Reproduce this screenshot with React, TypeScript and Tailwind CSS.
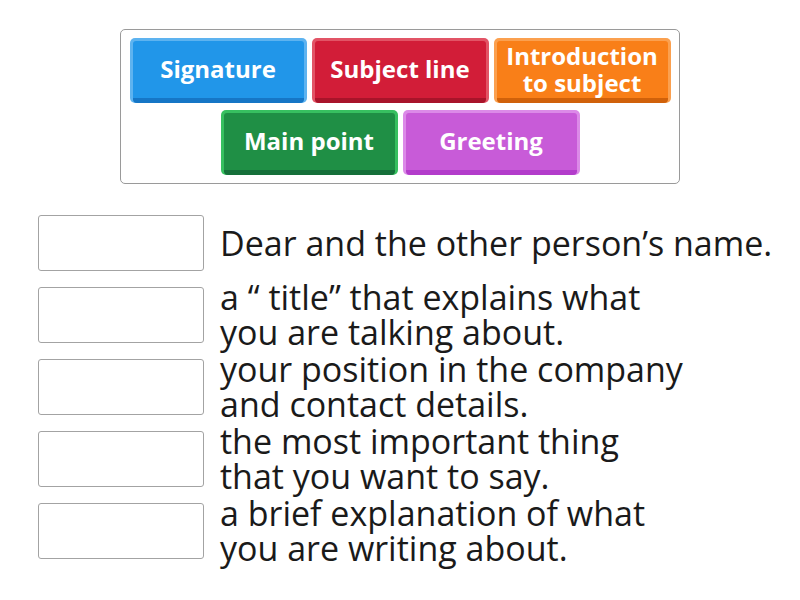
import React from "react";

type Tile = { label: string[]; light: string; main: string; dark: string };

const tiles: Tile[][] = [
  [
    { label: ["Signature"], light: "bg-[#5db3f0]", main: "bg-[#2196e9]", dark: "border-[#1676c6]" },
    { label: ["Subject line"], light: "bg-[#e25466]", main: "bg-[#d21d38]", dark: "border-[#a8142a]" },
    { label: ["Introduction", "to subject"], light: "bg-[#fba04f]", main: "bg-[#f97f18]", dark: "border-[#d0610a]" },
  ],
  [
    { label: ["Main point"], light: "bg-[#37c060]", main: "bg-[#1f8f45]", dark: "border-[#15703a]" },
    { label: ["Greeting"], light: "bg-[#dc8ae8]", main: "bg-[#c85bd8]", dark: "border-[#b33ccb]" },
  ],
];

const rows: string[][] = [
  ["Dear and the other person\u2019s name."],
  ["a \u201c title\u201d that explains what", "you are talking about."],
  ["your position in the company", "and contact details."],
  ["the most important thing", "that you want to say."],
  ["a brief explanation of what", "you are writing about."],
];

function TileView({ t }: { t: Tile }) {
  return (
    <div className={`w-[177px] h-[65px] rounded-[5px] ${t.light} px-[3px] pt-[3px] flex`}>
      <div
        className={`flex-1 ${t.main} border-b-[5px] ${t.dark} rounded-t-[3px] rounded-b-[4px] flex flex-col items-center justify-center text-white font-bold text-[24px] leading-[27px] text-center pb-[2px]`}
      >
        {t.label.map((l) => (
          <span key={l}>{l}</span>
        ))}
      </div>
    </div>
  );
}

export default function App() {
  return (
    <div className="w-[800px] h-[600px] bg-white" style={{ fontFamily: '"Open Sans", sans-serif' }}>
      <div className="pt-[29px]">
        <div className="mx-auto w-[560px] border border-[#9a9a9a] rounded-[5px] p-[8px] flex flex-col gap-[7px]">
          {tiles.map((row, i) => (
            <div key={i} className="flex justify-center gap-[5px]">
              {row.map((t) => (
                <TileView key={t.label[0]} t={t} />
              ))}
            </div>
          ))}
        </div>
      </div>
      <div className="mt-[23px] flex flex-col">
        {rows.map((r, i) => (
          <div key={i} className="h-[72px] flex items-center pl-[38px]">
            <div className="w-[166px] h-[56px] border border-[#a3a3a3] rounded-[3px] bg-white shrink-0" />
            <div className="ml-[16px] text-[34px] leading-[35px] text-[#1a1a1a]">
              {r.map((l) => (
                <div key={l} className="whitespace-nowrap">{l}</div>
              ))}
            </div>
          </div>
        ))}
      </div>
    </div>
  );
}
